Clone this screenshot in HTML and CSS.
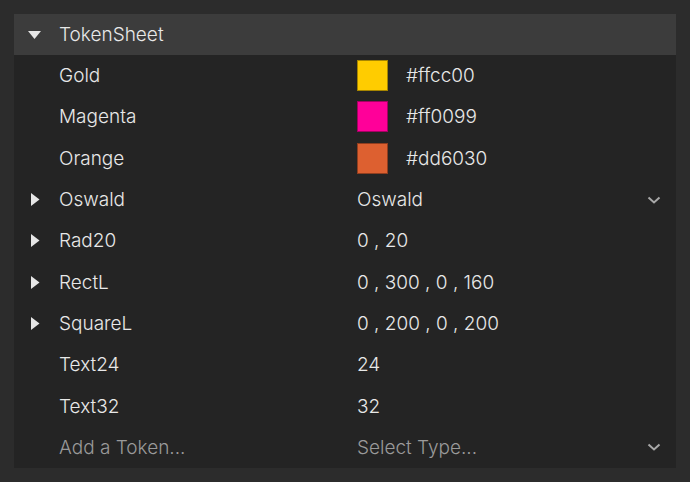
FILE: index.html
```html
<!DOCTYPE html>
<html>
<head>
<meta charset="utf-8">
<link rel="stylesheet" href="styles.css">
</head>
<body>
<div class="panel">
  <div class="header">
    <span class="tw"><svg width="13" height="8" viewBox="0 0 13 8"><path d="M0 0H13L6.5 8Z" fill="#e6e6e6"/></svg></span>
    <span class="name">TokenSheet</span>
  </div>
  <div class="row"><span class="tw"></span><span class="name">Gold</span><span class="val"><span class="sw" style="background:#ffcc00"></span>#ffcc00</span></div>
  <div class="row"><span class="tw"></span><span class="name">Magenta</span><span class="val"><span class="sw" style="background:#ff0099"></span>#ff0099</span></div>
  <div class="row"><span class="tw"></span><span class="name">Orange</span><span class="val"><span class="sw" style="background:#dd6030"></span>#dd6030</span></div>
  <div class="row"><span class="tw"><svg class="rt" width="9" height="13" viewBox="0 0 9 13"><path d="M0 0V13L8.5 6.5Z" fill="#e6e6e6"/></svg></span><span class="name">Oswald</span><span class="val">Oswald<svg class="chev" width="14" height="8" viewBox="0 0 14 8"><path d="M1.5 1.5L7 6.5L12.5 1.5" fill="none" stroke="#a8a8a8" stroke-width="2"/></svg></span></div>
  <div class="row"><span class="tw"><svg class="rt" width="9" height="13" viewBox="0 0 9 13"><path d="M0 0V13L8.5 6.5Z" fill="#e6e6e6"/></svg></span><span class="name">Rad20</span><span class="val">0 , 20</span></div>
  <div class="row"><span class="tw"><svg class="rt" width="9" height="13" viewBox="0 0 9 13"><path d="M0 0V13L8.5 6.5Z" fill="#e6e6e6"/></svg></span><span class="name">RectL</span><span class="val">0 , 300 , 0 , 160</span></div>
  <div class="row"><span class="tw"><svg class="rt" width="9" height="13" viewBox="0 0 9 13"><path d="M0 0V13L8.5 6.5Z" fill="#e6e6e6"/></svg></span><span class="name">SquareL</span><span class="val">0 , 200 , 0 , 200</span></div>
  <div class="row"><span class="tw"></span><span class="name">Text24</span><span class="val">24</span></div>
  <div class="row"><span class="tw"></span><span class="name">Text32</span><span class="val">32</span></div>
  <div class="row muted"><span class="tw"></span><span class="name">Add a Token...</span><span class="val">Select Type...<svg class="chev" width="14" height="8" viewBox="0 0 14 8"><path d="M1.5 1.5L7 6.5L12.5 1.5" fill="none" stroke="#a8a8a8" stroke-width="2"/></svg></span></div>
</div>
</body>
</html>
```
FILE: styles.css
```css
html, body {
  margin: 0;
  padding: 0;
  background: #2c2c2c;
}
body {
  padding: 14px;
  font-family: "Inter", "Noto Sans", sans-serif;
  font-size: 19px;
  font-weight: 350;
  color: #e8e8e8;
}
.panel {
  width: 662px;
  background: #242424;
  display: flex;
  flex-direction: column;
}
.header, .row {
  display: grid;
  grid-template-columns: 45px 298px 1fr;
  align-items: center;
  height: 41.3px;
}
.header {
  background: #3c3c3c;
  height: 41px;
}
.tw {
  display: flex;
  align-items: center;
  padding-left: 14px;
}
.tw .rt {
  margin-left: 3px;
}
.val {
  display: flex;
  align-items: center;
}
.sw {
  width: 29px;
  height: 29px;
  border: 1px solid rgba(0,0,0,0.35);
  margin-right: 18px;
}
.chev {
  margin-left: auto;
  margin-right: 15px;
}
.muted {
  color: #9a9a9a;
}
```
